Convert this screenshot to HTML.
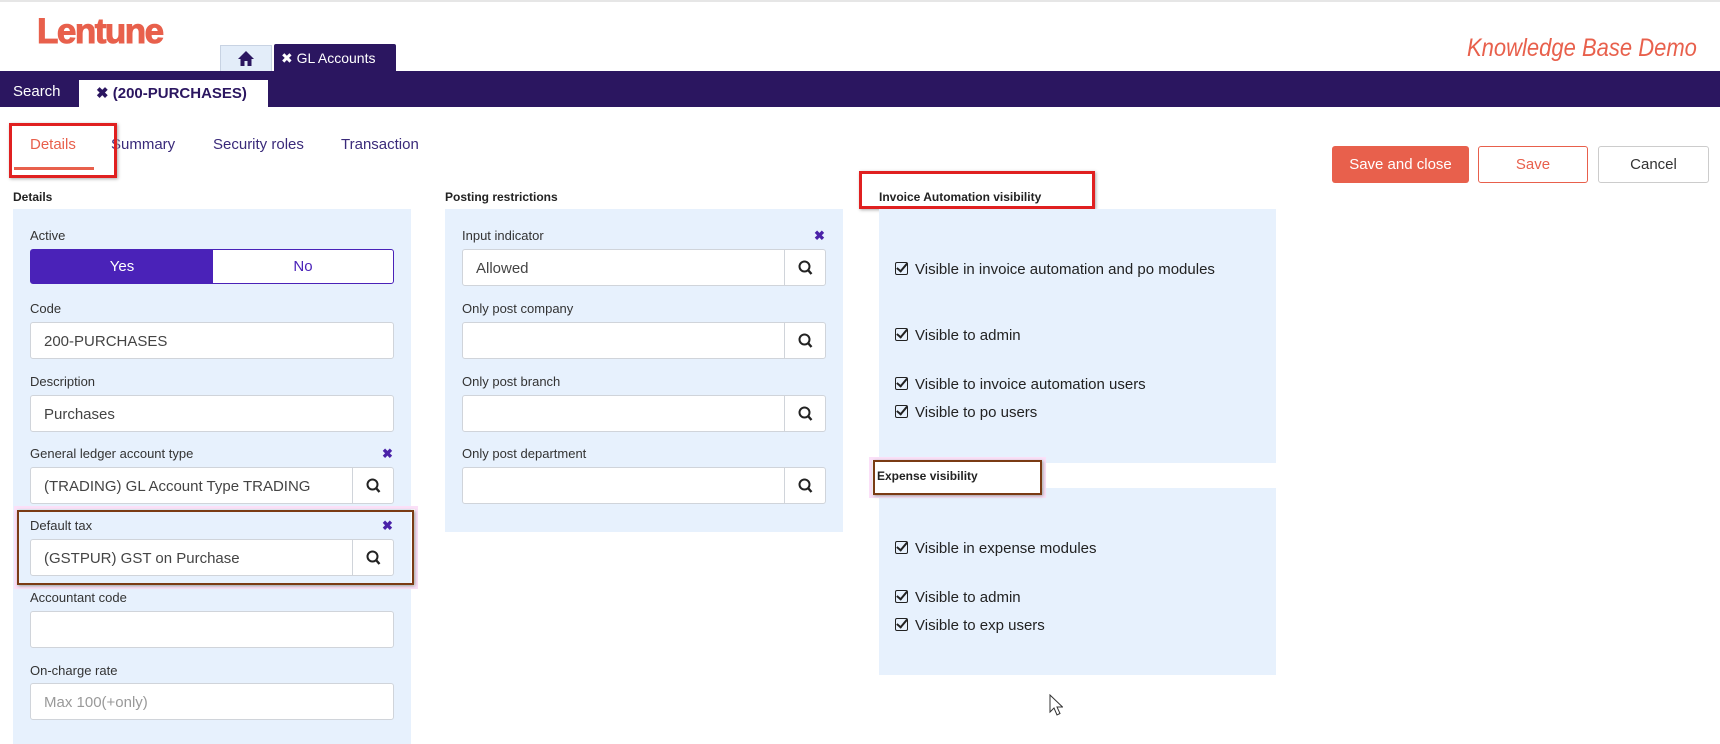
<!DOCTYPE html>
<html><head><style>
*{box-sizing:border-box;margin:0;padding:0}
body{width:1720px;height:740px;background:#fff;font-family:"Liberation Sans",sans-serif;position:relative;overflow:hidden;color:#333}
.a{position:absolute}
.lbl{position:absolute;font-size:13px;color:#333}
.inp{position:absolute;background:#fff;border:1px solid #d0d4da;border-radius:3px;height:37px;font-size:15px;color:#444;padding:10px 13px;white-space:nowrap}
.btn{position:absolute;top:0;right:0;width:41px;height:35px;border-left:1px solid #d0d4da;display:flex;align-items:center;justify-content:center}
.x{position:absolute;font-size:13px;color:#4a22a8;font-weight:bold}
.panel{position:absolute;background:#e7f1fd}
.h{position:absolute;font-size:12px;font-weight:bold;color:#222}
.cb{position:absolute;font-size:15px;color:#222;white-space:nowrap}
.cb span{display:inline-block;width:13px;height:13px;border:1.5px solid #222;border-radius:2px;margin-right:7px;vertical-align:-1px;position:relative}
.cb span:after{content:"";position:absolute;left:3px;top:-2px;width:4px;height:9px;border:solid #222;border-width:0 2px 2px 0;transform:rotate(40deg)}
</style></head><body>
<div class="a" style="left:0;top:0;width:1720px;height:2px;background:#e6e6e6"></div>
<div class="a" style="left:37px;top:12px;font-size:35px;font-weight:bold;color:#e8604c;letter-spacing:-1.5px;-webkit-text-stroke:1px #e8604c">Lentune</div>
<div class="a" style="left:1467px;top:34px;font-size:25px;font-style:italic;color:#e8604c;font-family:'Liberation Sans Narrow','Liberation Sans',sans-serif;transform:scaleX(0.88);transform-origin:left;white-space:nowrap">Knowledge Base Demo</div>
<div class="a" style="left:220px;top:45px;width:52px;height:27px;background:#e3edf9;border:1px solid #c8d3e3;display:flex;align-items:center;justify-content:center">
<svg width="16" height="15" viewBox="0 0 16 15"><path d="M8 0L0 8h2.5v7h4v-5h3v5h4V8H16z" fill="#2b1660"/></svg></div>
<div class="a" style="left:274px;top:44px;width:122px;height:28px;background:#2b1660;color:#fff;font-size:14px;padding:6px 0 0 7px;border-radius:2px 2px 0 0">✖ GL Accounts</div>
<div class="a" style="left:0;top:71px;width:1720px;height:36px;background:#2b1660"></div>
<div class="a" style="left:13px;top:83px;color:#fff;font-size:15px">Search</div>
<div class="a" style="left:79px;top:80px;width:189px;height:27px;background:#fff;color:#2b1660;font-size:15px;font-weight:bold;padding:4px 0 0 17px">✖ (200-PURCHASES)</div>
<div class="a" style="left:30px;top:136px;font-size:15px;color:#e8604c">Details</div>
<div class="a" style="left:111px;top:136px;font-size:15px;color:#3a2a7a">Summary</div>
<div class="a" style="left:213px;top:136px;font-size:15px;color:#3a2a7a">Security roles</div>
<div class="a" style="left:341px;top:136px;font-size:15px;color:#3a2a7a">Transaction</div>
<div class="a" style="left:14px;top:167px;width:80px;height:3px;background:#e8604c"></div>
<div class="a" style="left:9px;top:123px;width:108px;height:55px;border:3px solid #e02020;box-shadow:1px 1px 3px #aaa"></div>
<div class="a" style="left:1332px;top:146px;width:137px;height:37px;background:#e8604c;border-radius:3px;color:#fff;font-size:15px;text-align:center;line-height:37px">Save and close</div>
<div class="a" style="left:1478px;top:146px;width:110px;height:37px;border:1px solid #e8604c;border-radius:3px;color:#e8604c;font-size:15px;text-align:center;line-height:35px">Save</div>
<div class="a" style="left:1598px;top:146px;width:111px;height:37px;border:1px solid #ccc;border-radius:3px;color:#333;font-size:15px;text-align:center;line-height:35px">Cancel</div>

<div class="h" style="left:13px;top:190px">Details</div>
<div class="panel" style="left:13px;top:209px;width:398px;height:535px"></div>
<div class="lbl" style="left:30px;top:228px">Active</div>
<div class="a" style="left:30px;top:249px;width:364px;height:35px;border:1px solid #4a22b8;border-radius:3px;background:#fff;display:flex;font-size:15px">
<div style="width:182px;background:#4a22b8;color:#fff;text-align:center;line-height:33px">Yes</div><div style="flex:1;text-align:center;line-height:33px;color:#4a22b8">No</div></div>
<div class="lbl" style="left:30px;top:301px">Code</div>
<div class="inp" style="left:30px;top:322px;width:364px">200-PURCHASES</div>
<div class="lbl" style="left:30px;top:374px">Description</div>
<div class="inp" style="left:30px;top:395px;width:364px">Purchases</div>
<div class="lbl" style="left:30px;top:446px">General ledger account type</div><div class="x" style="left:382px;top:446px">✖</div>
<div class="inp" style="left:30px;top:467px;width:364px">(TRADING) GL Account Type TRADING<div class="btn"><svg width="15" height="16" viewBox="0 0 15 16"><circle cx="6.5" cy="6.5" r="5" fill="none" stroke="#222" stroke-width="2"/><path d="M10 10l3.5 4" stroke="#222" stroke-width="2.4"/></svg></div></div>
<div class="a" style="left:14px;top:506px;width:404px;height:83px;border:3px solid #fbe0f8"></div>
<div class="lbl" style="left:30px;top:518px">Default tax</div><div class="x" style="left:382px;top:518px">✖</div>
<div class="inp" style="left:30px;top:539px;width:364px">(GSTPUR) GST on Purchase<div class="btn"><svg width="15" height="16" viewBox="0 0 15 16"><circle cx="6.5" cy="6.5" r="5" fill="none" stroke="#222" stroke-width="2"/><path d="M10 10l3.5 4" stroke="#222" stroke-width="2.4"/></svg></div></div>
<div class="a" style="left:17px;top:510px;width:397px;height:75px;border:2px solid #7a3b14;box-shadow:1px 1px 3px #999"></div>
<div class="lbl" style="left:30px;top:590px">Accountant code</div>
<div class="inp" style="left:30px;top:611px;width:364px"></div>
<div class="lbl" style="left:30px;top:663px">On-charge rate</div>
<div class="inp" style="left:30px;top:683px;width:364px;color:#999">Max 100(+only)</div>

<div class="h" style="left:445px;top:190px">Posting restrictions</div>
<div class="panel" style="left:445px;top:209px;width:398px;height:323px"></div>
<div class="lbl" style="left:462px;top:228px">Input indicator</div><div class="x" style="left:814px;top:228px">✖</div>
<div class="inp" style="left:462px;top:249px;width:364px">Allowed<div class="btn"><svg width="15" height="16" viewBox="0 0 15 16"><circle cx="6.5" cy="6.5" r="5" fill="none" stroke="#222" stroke-width="2"/><path d="M10 10l3.5 4" stroke="#222" stroke-width="2.4"/></svg></div></div>
<div class="lbl" style="left:462px;top:301px">Only post company</div>
<div class="inp" style="left:462px;top:322px;width:364px"><div class="btn"><svg width="15" height="16" viewBox="0 0 15 16"><circle cx="6.5" cy="6.5" r="5" fill="none" stroke="#222" stroke-width="2"/><path d="M10 10l3.5 4" stroke="#222" stroke-width="2.4"/></svg></div></div>
<div class="lbl" style="left:462px;top:374px">Only post branch</div>
<div class="inp" style="left:462px;top:395px;width:364px"><div class="btn"><svg width="15" height="16" viewBox="0 0 15 16"><circle cx="6.5" cy="6.5" r="5" fill="none" stroke="#222" stroke-width="2"/><path d="M10 10l3.5 4" stroke="#222" stroke-width="2.4"/></svg></div></div>
<div class="lbl" style="left:462px;top:446px">Only post department</div>
<div class="inp" style="left:462px;top:467px;width:364px"><div class="btn"><svg width="15" height="16" viewBox="0 0 15 16"><circle cx="6.5" cy="6.5" r="5" fill="none" stroke="#222" stroke-width="2"/><path d="M10 10l3.5 4" stroke="#222" stroke-width="2.4"/></svg></div></div>

<div class="h" style="left:879px;top:190px">Invoice Automation visibility</div>
<div class="a" style="left:859px;top:171px;width:236px;height:38px;border:3px solid #e02020;box-shadow:1px 1px 3px #aaa"></div>
<div class="panel" style="left:879px;top:209px;width:397px;height:254px"></div>
<div class="cb" style="left:895px;top:261px"><span></span>Visible in invoice automation and po modules</div>
<div class="cb" style="left:895px;top:327px"><span></span>Visible to admin</div>
<div class="cb" style="left:895px;top:376px"><span></span>Visible to invoice automation users</div>
<div class="cb" style="left:895px;top:404px"><span></span>Visible to po users</div>
<div class="panel" style="left:879px;top:488px;width:397px;height:187px"></div>
<div class="a" style="left:869px;top:457px;width:177px;height:41px;border:3px solid #fbe0f8"></div>
<div class="a" style="left:873px;top:460px;width:169px;height:35px;background:#fff;border:2px solid #7a3b14;box-shadow:1px 1px 3px #999"></div>
<div class="h" style="left:877px;top:469px">Expense visibility</div>
<div class="cb" style="left:895px;top:540px"><span></span>Visible in expense modules</div>
<div class="cb" style="left:895px;top:589px"><span></span>Visible to admin</div>
<div class="cb" style="left:895px;top:617px"><span></span>Visible to exp users</div>
<svg class="a" style="left:1049px;top:694px" width="14" height="22" viewBox="0 0 14 22"><path d="M1 1v17l4-4 3 7 3-1.5-3-6.5h5.5z" fill="#fff" stroke="#333" stroke-width="1"/></svg>
</body></html>
